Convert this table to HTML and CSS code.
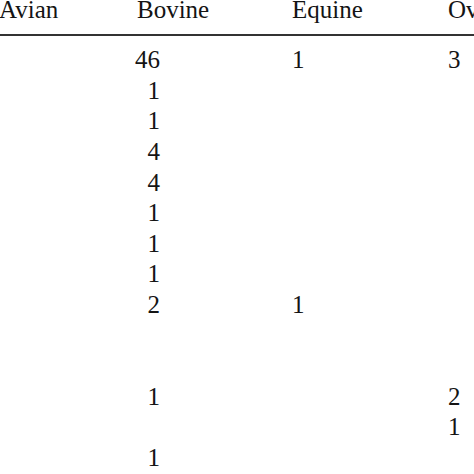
FILE: index.html
```html
<!DOCTYPE html>
<html>
<head>
<meta charset="utf-8">
<link rel="stylesheet" href="styles.css">
</head>
<body>
<div class="table">
  <div class="head">
    <div class="th">Avian</div>
    <div class="th">Bovine</div>
    <div class="th">Equine</div>
    <div class="th">Ovine</div>
  </div>
  <div class="body">
    <div class="td"></div><div class="td"><span class="num">46</span></div><div class="td">1</div><div class="td">3</div>
    <div class="td"></div><div class="td"><span class="num">1</span></div><div class="td"></div><div class="td"></div>
    <div class="td"></div><div class="td"><span class="num">1</span></div><div class="td"></div><div class="td"></div>
    <div class="td"></div><div class="td"><span class="num">4</span></div><div class="td"></div><div class="td"></div>
    <div class="td"></div><div class="td"><span class="num">4</span></div><div class="td"></div><div class="td"></div>
    <div class="td"></div><div class="td"><span class="num">1</span></div><div class="td"></div><div class="td"></div>
    <div class="td"></div><div class="td"><span class="num">1</span></div><div class="td"></div><div class="td"></div>
    <div class="td"></div><div class="td"><span class="num">1</span></div><div class="td"></div><div class="td"></div>
    <div class="td"></div><div class="td"><span class="num">2</span></div><div class="td">1</div><div class="td"></div>
    <div class="td"></div><div class="td"></div><div class="td"></div><div class="td"></div>
    <div class="td"></div><div class="td"></div><div class="td"></div><div class="td"></div>
    <div class="td"></div><div class="td"><span class="num">1</span></div><div class="td"></div><div class="td">2</div>
    <div class="td"></div><div class="td"></div><div class="td"></div><div class="td">1</div>
    <div class="td"></div><div class="td"><span class="num">1</span></div><div class="td"></div><div class="td"></div>
  </div>
</div>
</body>
</html>
```
FILE: styles.css
```css
html, body {
  margin: 0;
  padding: 0;
  background: #ffffff;
  overflow: hidden;
}
.table {
  margin-left: -1px;
  width: 520px;
  font-family: "Liberation Serif", "Times New Roman", serif;
  font-size: 25px;
  color: #141414;
}
.head {
  display: grid;
  grid-template-columns: 138px 155px 156px 1fr;
  line-height: 20px;
  padding-bottom: 13.5px;
  border-bottom: 2px solid #333333;
  white-space: nowrap;
}
.body {
  display: grid;
  grid-template-columns: 138px 155px 156px 1fr;
  grid-auto-rows: 30.6px;
  line-height: 30.6px;
  padding-top: 9.8px;
}
.num {
  display: inline-block;
  width: 23px;
  text-align: right;
  direction: rtl;
}
```
